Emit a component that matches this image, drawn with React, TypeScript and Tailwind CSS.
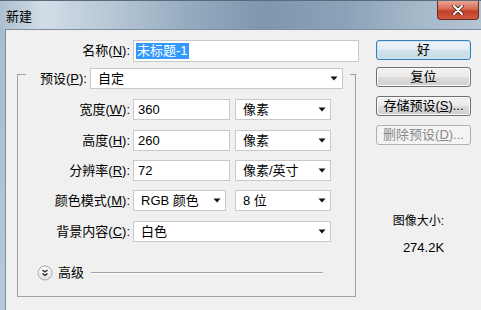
import React from "react";

const font = { fontFamily: '"Liberation Sans", "Noto Sans CJK SC", sans-serif' };

function Arrow() {
  return (
    <svg width="8" height="5" viewBox="0 0 8 5" className="shrink-0">
      <path d="M0.5 0.5 H7.5 L4 4.5 Z" fill="#111" />
    </svg>
  );
}

function TextBox({ value, width }: { value: string; width: string }) {
  return (
    <div className={`${width} h-[21px] bg-white border border-[#c9c9c9] flex items-center pl-[4px] text-[13px] text-black`}>
      {value}
    </div>
  );
}

function Select({ value, width }: { value: string; width: string }) {
  return (
    <div className={`${width} h-[21px] bg-white border border-[#c9c9c9] flex items-center justify-between pl-[7px] pr-[4px] text-[13px] text-black`}>
      <span>{value}</span>
      <Arrow />
    </div>
  );
}

function Label({ text, mn }: { text: string; mn: string }) {
  return (
    <div className="w-[112px] text-right text-[13px] text-black whitespace-nowrap">
      {text}(<u>{mn}</u>):
    </div>
  );
}

function Row({ text, mn, mt, children }: { text: string; mn: string; mt: string; children: React.ReactNode }) {
  return (
    <div className={`flex items-center ${mt}`}>
      <Label text={text} mn={mn} />
      <div className="ml-[3px] flex gap-[5px]">{children}</div>
    </div>
  );
}

function Button({ children, kind = "normal", mt }: { children: React.ReactNode; kind?: "default" | "normal" | "disabled"; mt: string }) {
  const styles = {
    default:
      "border-[#3c7fb1] bg-[linear-gradient(180deg,#eef4f8_0%,#e2ecf3_50%,#d3e2ec_51%,#c8dae6_100%)] text-black shadow-[inset_0_0_0_1px_#c4e2f5]",
    normal:
      "border-[#707070] bg-[linear-gradient(180deg,#f2f2f2_0%,#ebebeb_50%,#dddddd_51%,#cfcfcf_100%)] text-black shadow-[inset_0_0_0_1px_#fbfbfb]",
    disabled: "border-[#adb2b5] bg-[#f4f4f4] text-[#8a8a8a]",
  }[kind];
  return (
    <div className={`${mt} w-[95px] h-[20px] rounded-[3px] border flex items-center justify-center text-[13px] ${styles}`}>
      {children}
    </div>
  );
}

export default function App() {
  return (
    <div className="w-[481px] h-[310px] overflow-hidden flex flex-col bg-[#b3c4d4]" style={font}>
      {/* Title bar */}
      <div className="h-[29px] shrink-0 flex items-start border-t border-[#5b6b7a] bg-[linear-gradient(90deg,#aebfcf_0%,#d2dde7_9%,#b9c9d7_22%,#93aabf_40%,#7f97ae_55%,#8ba3b9_72%,#a7bacb_88%,#b3c4d3_100%)]">
        <div className="pl-[6px] pt-[6px] text-[13px] text-black">新建</div>
        <div className="ml-auto mr-[2px] w-[42px] h-[19px] rounded-b-[4px] border border-t-0 border-[#6b2a20] bg-[linear-gradient(180deg,#e9a593_0%,#d76a54_45%,#c0402a_55%,#cf5a3f_100%)] flex items-center justify-center">
          <svg width="12" height="10" viewBox="0 0 12 10">
            <path d="M2 1 L10 9 M10 1 L2 9" stroke="#3a1a14" strokeWidth="3.4" strokeLinecap="round" />
            <path d="M2 1 L10 9 M10 1 L2 9" stroke="#ffffff" strokeWidth="2" strokeLinecap="round" />
          </svg>
        </div>
      </div>

      {/* Body */}
      <div className="flex-1 flex">
        <div className="w-[5px] bg-[linear-gradient(180deg,#a9bccd_0%,#b8c8d6_100%)]" />
        <div className="flex-1 flex bg-[#f0f0f0] border-l border-t border-[#7d8e9e]">
          {/* Left form */}
          <div className="w-[354px] flex flex-col pt-[10px]">
            <div className="flex items-center">
              <div className="w-[124px] text-right text-[13px] text-black">
                名称(<u>N</u>):
              </div>
              <div className="ml-[3px] w-[226px] h-[22px] bg-white border border-[#c9c9c9] flex items-center pl-[2px]">
                <span className="bg-[#3399ff] text-white text-[13px] px-[1px] leading-[16px]">未标题-1</span>
              </div>
            </div>

            {/* Group */}
            <div className="mt-[12px] ml-[11px] w-[339px] h-[223px] border-l border-r border-b border-[#a0a0a0] flex flex-col">
              <div className="-mt-[6px] flex items-start">
                <div className="mt-[6px] w-[8px] h-px bg-[#a0a0a0]" />
                <div className="ml-[14px] h-[21px] flex items-center text-[13px] text-black whitespace-nowrap">
                  预设(<u>P</u>):
                </div>
                <div className="ml-[3px]">
                  <Select value="自定" width="w-[253px]" />
                </div>
                <div className="mt-[6px] ml-[7px] flex-1 h-px bg-[#a0a0a0]" />
              </div>

              <Row text="宽度" mn="W" mt="mt-[10px]">
                <TextBox value="360" width="w-[97px]" />
                <Select value="像素" width="w-[96px]" />
              </Row>
              <Row text="高度" mn="H" mt="mt-[10px]">
                <TextBox value="260" width="w-[97px]" />
                <Select value="像素" width="w-[96px]" />
              </Row>
              <Row text="分辨率" mn="R" mt="mt-[9px]">
                <TextBox value="72" width="w-[97px]" />
                <Select value="像素/英寸" width="w-[96px]" />
              </Row>
              <Row text="颜色模式" mn="M" mt="mt-[9px]">
                <Select value="RGB 颜色" width="w-[93px]" />
                <div className="ml-[4px]">
                  <Select value="8 位" width="w-[96px]" />
                </div>
              </Row>
              <Row text="背景内容" mn="C" mt="mt-[10px]">
                <Select value="白色" width="w-[198px]" />
              </Row>

              <div className="mt-[21px] flex items-center">
                <svg width="16" height="16" viewBox="0 0 16 16" className="ml-[19px] shrink-0">
                  <defs>
                    <linearGradient id="adv" x1="0" y1="0" x2="0" y2="1">
                      <stop offset="0" stopColor="#ffffff" />
                      <stop offset="1" stopColor="#e2e2e2" />
                    </linearGradient>
                  </defs>
                  <circle cx="8" cy="8" r="7" fill="url(#adv)" stroke="#a8a8a8" />
                  <path d="M5.5 5 L8 7 L10.5 5 M5.5 8.5 L8 10.5 L10.5 8.5" stroke="#222" strokeWidth="1.3" fill="none" />
                </svg>
                <div className="ml-[5px] text-[13px] text-black">高级</div>
                <div className="ml-[7px] mr-[32px] flex-1 h-[2px] border-t border-[#a0a0a0] border-b border-b-white" />
              </div>
            </div>
          </div>

          {/* Right buttons */}
          <div className="ml-[16px] flex flex-col pt-[10px]">
            <Button kind="default" mt="mt-0">好</Button>
            <Button mt="mt-[7px]">复位</Button>
            <Button mt="mt-[9px]">
              存储预设(<u>S</u>)...
            </Button>
            <Button kind="disabled" mt="mt-[9px]">
              删除预设(<u>D</u>)...
            </Button>
            <div className="mt-[67px] w-[95px] flex flex-col items-center text-black">
              <div className="text-[12px] -ml-[10px]">图像大小:</div>
              <div className="mt-[8px] text-[13px]">274.2K</div>
            </div>
          </div>
        </div>
      </div>
    </div>
  );
}
